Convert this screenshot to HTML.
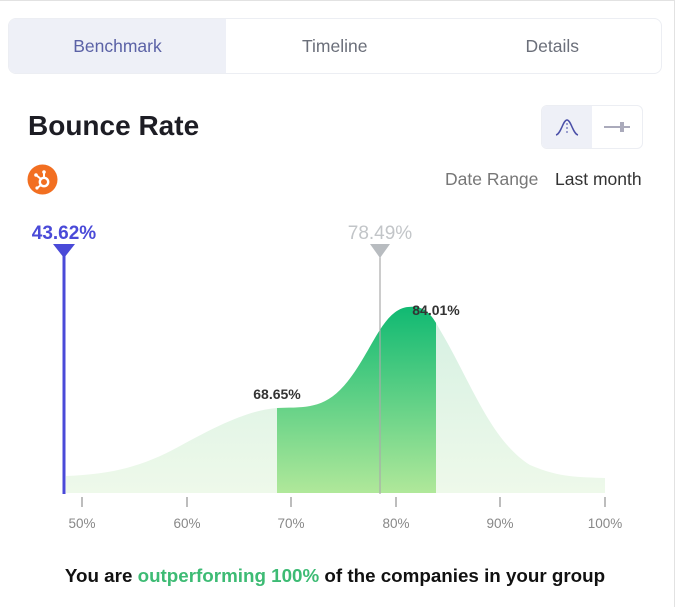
<!DOCTYPE html>
<html><head><style>
body{margin:0;width:676px;height:608px;background:#fff;font-family:"Liberation Sans",sans-serif;position:relative;overflow:hidden}
.frame{position:absolute;left:0;top:0;width:674px;height:606px;border:1px solid #e2e2e2;border-bottom:none;border-left:none}
.tabs{position:absolute;left:8px;top:18px;width:652px;height:54px;border:1px solid #eceef3;border-radius:8px;overflow:hidden;display:flex}
.tabs div{flex:1;display:flex;align-items:center;justify-content:center;font-size:17.5px;color:#6b6f7a}
.tabs div.a{background:#eef0f7;color:#5b62a6;flex:0 0 217px}
.title{position:absolute;left:28px;top:110px;font-size:28px;font-weight:bold;color:#1d1d24}
.tog{position:absolute;left:541px;top:105px;width:100px;height:42px;border:1px solid #eceef3;border-radius:6px;overflow:hidden;display:flex}
.tog div{flex:1;display:flex;align-items:center;justify-content:center}
.tog .a{background:#eef0f7}
.dr{position:absolute;top:169px;font-size:17.5px}
</style></head><body>
<div class="frame"></div>
<div class="tabs"><div class="a">Benchmark</div><div>Timeline</div><div>Details</div></div>
<div class="title">Bounce Rate</div>
<div class="tog"><div class="a"><svg width="26" height="20" viewBox="0 0 26 20"><path d="M2 18 C7 17 9 3 13 3 C17 3 19 17 24 18" fill="none" stroke="#4b50a8" stroke-width="1.5"/><path d="M13 6 V18" stroke="#4b50a8" stroke-dasharray="2 2"/></svg></div><div><svg width="30" height="20"><path d="M2 10 H28" stroke="#aab" stroke-width="2"/><rect x="18" y="5" width="4" height="10" fill="#aab"/></svg></div></div>
<svg style="position:absolute;left:27px;top:164px" width="31" height="31" viewBox="0 0 31 31"><circle cx="15.5" cy="15.5" r="15" fill="#f26f21"/><circle cx="17" cy="18" r="4.2" fill="none" stroke="#fff" stroke-width="2.4"/><path d="M17 14 V8 M14 15 L9 11 M14 21 L10 24" stroke="#fff" stroke-width="2"/><circle cx="17" cy="8" r="1.8" fill="#fff"/><circle cx="9" cy="11" r="1.8" fill="#fff"/><circle cx="10" cy="24" r="1.6" fill="#fff"/></svg>
<div class="dr" style="left:445px;color:#777">Date Range</div>
<div class="dr" style="left:555px;color:#333">Last month</div>
<svg style="position:absolute;left:0;top:0" width="676" height="608">
<defs>
<linearGradient id="lg" x1="0" y1="0" x2="0" y2="1"><stop offset="0" stop-color="#d5f0e2"/><stop offset="1" stop-color="#eef9ea"/></linearGradient>
<linearGradient id="dg" x1="0" y1="0" x2="0" y2="1"><stop offset="0" stop-color="#10b972"/><stop offset="1" stop-color="#b0e89a"/></linearGradient>
<clipPath id="cp"><rect x="277" y="0" width="159" height="600"/></clipPath>
</defs>
<path d="M66 476 C110 474 140 468 180 446 C220 424 250 410 277 408 C300 407 320 410 340 390 C370 360 380 310 408 307 C425 305 432 315 440 330 C470 380 490 440 530 465 C560 478 580 477 605 478 L605 493 L66 493 Z" fill="url(#lg)"/>
<path d="M66 476 C110 474 140 468 180 446 C220 424 250 410 277 408 C300 407 320 410 340 390 C370 360 380 310 408 307 C425 305 432 315 440 330 C470 380 490 440 530 465 C560 478 580 477 605 478 L605 493 L66 493 Z" fill="url(#dg)" clip-path="url(#cp)"/>
<line x1="64" y1="250" x2="64" y2="494" stroke="#4a4ad8" stroke-width="3"/>
<path d="M53 244 H75 L64 258 Z" fill="#4a4ad8"/>
<line x1="380" y1="250" x2="380" y2="494" stroke="#aaa" stroke-width="1.2"/>
<path d="M370 244 H390 L380 258 Z" fill="#b8bcc0"/>
<g stroke="#999" stroke-width="1.3"><line x1="82" y1="497" x2="82" y2="507"/><line x1="187" y1="497" x2="187" y2="507"/><line x1="291" y1="497" x2="291" y2="507"/><line x1="396" y1="497" x2="396" y2="507"/><line x1="500" y1="497" x2="500" y2="507"/><line x1="605" y1="497" x2="605" y2="507"/></g>
<text x="64" y="239" text-anchor="middle" font-size="19" font-weight="bold" fill="#4a4ad8" font-family="Liberation Sans">43.62%</text>
<text x="380" y="239" text-anchor="middle" font-size="19" fill="#c2c5c8" font-family="Liberation Sans">78.49%</text>
<text x="277" y="399" text-anchor="middle" font-size="14" font-weight="bold" fill="#333" font-family="Liberation Sans">68.65%</text>
<text x="436" y="315" text-anchor="middle" font-size="14" font-weight="bold" fill="#333" font-family="Liberation Sans">84.01%</text>
<g font-size="13.5" fill="#888" text-anchor="middle" font-family="Liberation Sans"><text x="82" y="528">50%</text><text x="187" y="528">60%</text><text x="291" y="528">70%</text><text x="396" y="528">80%</text><text x="500" y="528">90%</text><text x="605" y="528">100%</text></g>
<text x="335" y="582" text-anchor="middle" font-size="18.8" font-weight="bold" fill="#111" font-family="Liberation Sans">You are <tspan fill="#3dbb74">outperforming 100%</tspan> of the companies in your group</text>
</svg>
</body></html>
